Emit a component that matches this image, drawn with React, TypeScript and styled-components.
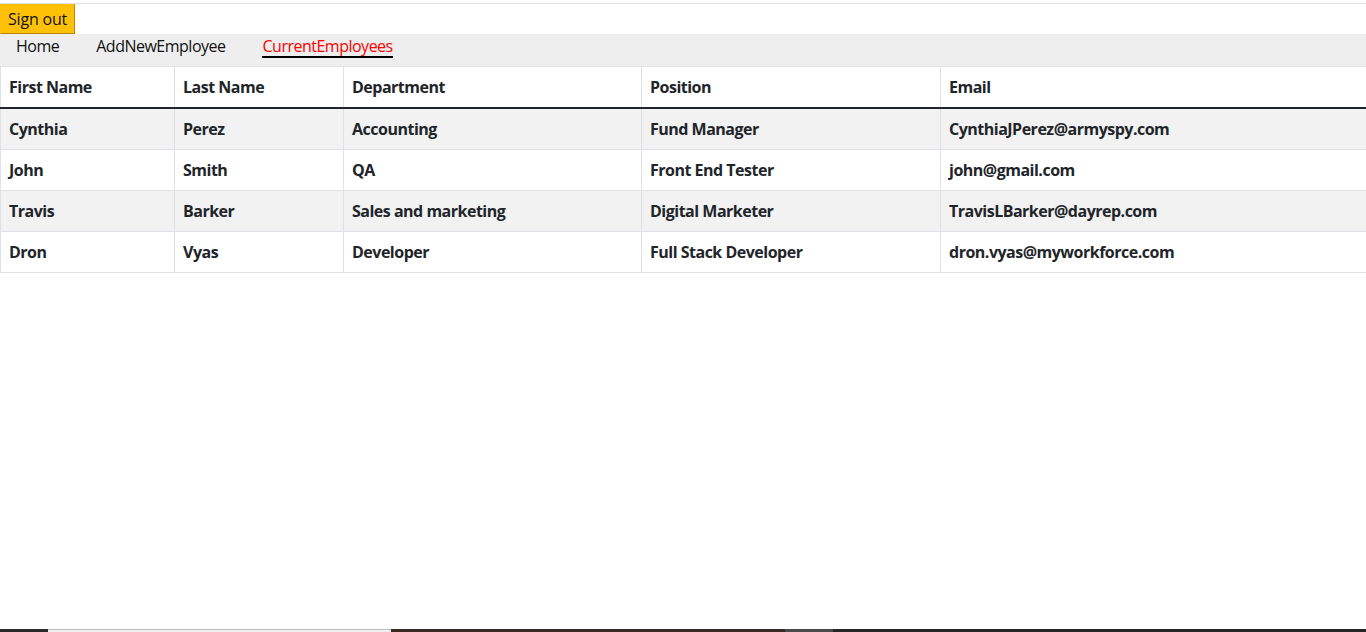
import React from 'react';
import styled, { createGlobalStyle } from 'styled-components';

const GlobalStyle = createGlobalStyle`
  html, body {
    margin: 0;
    padding: 0;
    background: #fff;
    font-family: 'Segoe UI', 'Open Sans', 'Noto Sans', sans-serif;
    color: #212529;
  }
  body {
    height: 632px;
    overflow: hidden;
  }
`;

const Page = styled.div`
  border-top: 1px solid #e0e0e0;
  margin-top: 3px;
`;

const SignOut = styled.button`
  display: block;
  height: 30px;
  width: 75px;
  padding: 0 6px;
  background: #ffc107;
  border: 1px solid #ffc107;
  border-right-color: #b8860b;
  border-bottom-color: #b8860b;
  font-family: inherit;
  font-size: 16px;
  letter-spacing: -0.2px;
  color: #111;
  text-align: center;
`;

const Nav = styled.nav`
  display: flex;
  align-items: center;
  gap: 37px;
  height: 32px;
  padding-left: 16px;
  background: #eee;
`;

const NavLink = styled.a<{ active?: boolean }>`
  font-size: 16px;
  line-height: 20px;
  letter-spacing: -0.5px;
  color: ${p => (p.active ? '#ff0000' : '#111')};
  border-bottom: 2px solid ${p => (p.active ? '#000' : 'transparent')};
  text-decoration: none;
  margin-bottom: 6px;
`;

const Table = styled.table`
  width: 100%;
  border-collapse: collapse;
  table-layout: fixed;
  font-size: 16px;
  font-weight: 700;
  letter-spacing: -0.5px;
`;

const Th = styled.th`
  text-align: left;
  padding: 8px 8px;
  line-height: 24px;
  border: 1px solid #dee2e6;
  border-bottom: 2px solid #212529;
`;

const Row = styled.tr<{ striped: boolean }>`
  background: ${p => (p.striped ? '#f2f2f2' : '#fff')};
`;

const Td = styled.td`
  padding: 8px 8px;
  line-height: 24px;
  border: 1px solid #dee2e6;
`;

const Taskbar = styled.div`
  position: fixed;
  left: 0;
  right: 0;
  bottom: 0;
  height: 3px;
  display: flex;
`;

const Segment = styled.div<{ w: number; bg: string; light?: boolean }>`
  width: ${p => p.w}px;
  background: ${p => p.bg};
  border-top: ${p => (p.light ? '1px solid #bbb' : 'none')};
  flex: ${p => (p.w === 0 ? 1 : 'none')};
`;

const employees = [
  ['Cynthia', 'Perez', 'Accounting', 'Fund Manager', 'CynthiaJPerez@armyspy.com'],
  ['John', 'Smith', 'QA', 'Front End Tester', 'john@gmail.com'],
  ['Travis', 'Barker', 'Sales and marketing', 'Digital Marketer', 'TravisLBarker@dayrep.com'],
  ['Dron', 'Vyas', 'Developer', 'Full Stack Developer', 'dron.vyas@myworkforce.com'],
];

const widths = [174, 169, 298, 299, 426];

export default function App() {
  return (
    <Page>
      <GlobalStyle />
      <SignOut>Sign out</SignOut>
      <Nav>
        <NavLink>Home</NavLink>
        <NavLink>AddNewEmployee</NavLink>
        <NavLink active>CurrentEmployees</NavLink>
      </Nav>
      <Table>
        <colgroup>
          {widths.map((w, i) => (
            <col key={i} style={{ width: w }} />
          ))}
        </colgroup>
        <thead>
          <tr>
            <Th>First Name</Th>
            <Th>Last Name</Th>
            <Th>Department</Th>
            <Th>Position</Th>
            <Th>Email</Th>
          </tr>
        </thead>
        <tbody>
          {employees.map((e, i) => (
            <Row key={i} striped={i % 2 === 0}>
              {e.map((c, j) => (
                <Td key={j}>{c}</Td>
              ))}
            </Row>
          ))}
        </tbody>
      </Table>
      <Taskbar>
        <Segment w={48} bg="#2a2a2a" />
        <Segment w={343} bg="#eeeeee" light />
        <Segment w={394} bg="#3a2a26" />
        <Segment w={48} bg="#4a4a4a" />
        <Segment w={0} bg="#262626" />
      </Taskbar>
    </Page>
  );
}
